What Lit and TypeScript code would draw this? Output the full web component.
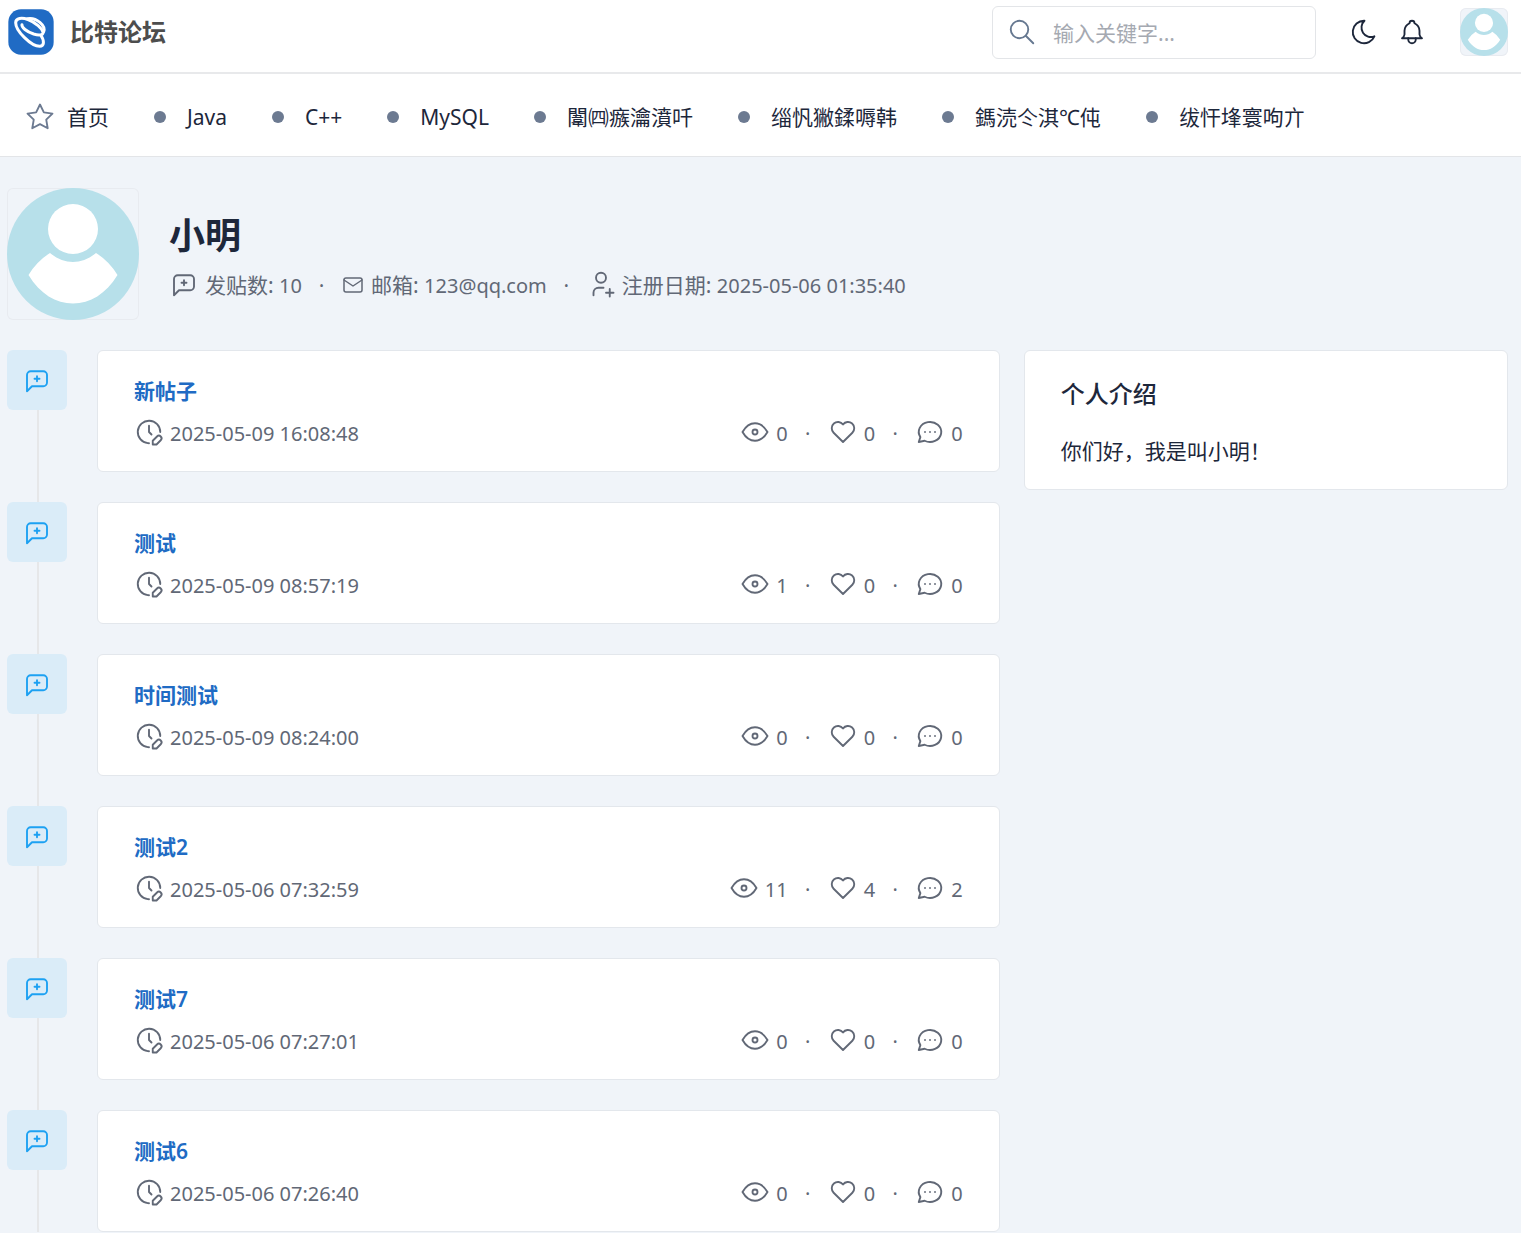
import { LitElement, html, css, svg } from "lit";
import { customElement, property } from "lit/decorators.js";

const ICONS: Record<string, string[]> = {
  star: [
    "M12 17.75l-6.172 3.245l1.179 -6.873l-5 -4.867l6.9 -1l3.086 -6.253l3.086 6.253l6.9 1l-5 4.867l1.179 6.873z",
  ],
  search: ["M10 10m-7 0a7 7 0 1 0 14 0a7 7 0 1 0 -14 0", "M21 21l-6 -6"],
  moon: ["M12 3c.132 0 .263 0 .393 0a7.5 7.5 0 0 0 7.92 12.446a9 9 0 1 1 -8.313 -12.454z"],
  bell: [
    "M10 5a2 2 0 1 1 4 0a7 7 0 0 1 4 6v3a4 4 0 0 0 2 3h-16a4 4 0 0 0 2 -3v-3a7 7 0 0 1 4 -6",
    "M9 17v1a3 3 0 0 0 6 0v-1",
  ],
  messagePlus: [
    "M4 21v-13a3 3 0 0 1 3 -3h10a3 3 0 0 1 3 3v6a3 3 0 0 1 -3 3h-9l-4 4",
    "M10 11h4",
    "M12 9v4",
  ],
  mail: [
    "M3 7a2 2 0 0 1 2 -2h14a2 2 0 0 1 2 2v10a2 2 0 0 1 -2 2h-14a2 2 0 0 1 -2 -2v-10z",
    "M3 7l9 6l9 -6",
  ],
  userPlus: [
    "M8 7a4 4 0 1 0 8 0a4 4 0 0 0 -8 0",
    "M16 19h6",
    "M19 16v6",
    "M6 21v-2a4 4 0 0 1 4 -4h4",
  ],
  clockEdit: [
    "M21 12a9 9 0 1 0 -9.972 8.948c.32 .034 .644 .052 .972 .052",
    "M12 7v5l2 2",
    "M18.42 15.61a2.1 2.1 0 0 1 2.97 2.97l-3.39 3.42h-3v-3l3.42 -3.39z",
  ],
  eye: [
    "M12 12m-2 0a2 2 0 1 0 4 0a2 2 0 1 0 -4 0",
    "M22 12c-2.667 4.667 -6 7 -10 7s-7.333 -2.333 -10 -7c2.667 -4.667 6 -7 10 -7s7.333 2.333 10 7",
  ],
  heart: [
    "M19.5 12.572l-7.5 7.428l-7.5 -7.428a5 5 0 1 1 7.5 -6.566a5 5 0 1 1 7.5 6.572",
  ],
  comment: [
    "M3 20l1.3 -3.9a9 8 0 1 1 3.4 2.9l-4.7 1",
    "M12 12v.01",
    "M8 12v.01",
    "M16 12v.01",
  ],
};

interface Post {
  title: string;
  date: string;
  views: number;
  likes: number;
  replies: number;
}

const BOARDS = [
  "Java",
  "C++",
  "MySQL",
  "闈㈣瘯瀹濆吀",
  "缁忛獙鍒嗕韩",
  "鎷涜仒淇℃伅",
  "绂忓埄寰呴亣",
];

const POSTS: Post[] = [
  { title: "新帖子", date: "2025-05-09 16:08:48", views: 0, likes: 0, replies: 0 },
  { title: "测试", date: "2025-05-09 08:57:19", views: 1, likes: 0, replies: 0 },
  { title: "时间测试", date: "2025-05-09 08:24:00", views: 0, likes: 0, replies: 0 },
  { title: "测试2", date: "2025-05-06 07:32:59", views: 11, likes: 4, replies: 2 },
  { title: "测试7", date: "2025-05-06 07:27:01", views: 0, likes: 0, replies: 0 },
  { title: "测试6", date: "2025-05-06 07:26:40", views: 0, likes: 0, replies: 0 },
];

@customElement("line-icon")
export class LineIcon extends LitElement {
  @property() name = "";

  static styles = css`
    :host {
      display: block;
      flex: none;
      width: 30px;
      height: 30px;
    }
    .glyph {
      display: block;
      width: 100%;
      height: 100%;
      fill: none;
      stroke: currentColor;
      stroke-width: 1.5;
      stroke-linecap: round;
      stroke-linejoin: round;
    }
  `;

  render() {
    return html`<svg class="glyph" viewBox="0 0 24 24" aria-hidden="true">
      ${(ICONS[this.name] ?? []).map((d) => svg`<path d=${d}></path>`)}
    </svg>`;
  }
}

@customElement("user-avatar")
export class UserAvatar extends LitElement {
  static styles = css`
    :host {
      display: block;
      flex: none;
      box-sizing: border-box;
      overflow: hidden;
      border-radius: 6px;
      background: #f0f4f9;
      box-shadow: inset 0 0 0 1px #e8ebf0;
    }
    .portrait {
      display: block;
      width: 100%;
      height: 100%;
    }
  `;

  render() {
    return html`<svg class="portrait" viewBox="0 0 132 132" aria-hidden="true">
      <circle cx="66" cy="66" r="66" fill="#b7e0ea"></circle>
      <circle cx="66" cy="41" r="25" fill="#fff"></circle>
      <path
        d="M43 65C57 77 75 77 89 65Q102 73 110.500 87C99 106 83 115.500 66 115.500S33 106 21.500 87Q30 73 43 65Z"
        fill="#fff"
      ></path>
    </svg>`;
  }
}

@customElement("post-item")
export class PostItem extends LitElement {
  @property({ attribute: false }) post!: Post;

  static styles = css`
    :host {
      display: flex;
      gap: 30px;
    }
    .rail {
      display: flex;
      flex-direction: column;
      flex: none;
      width: 60px;
    }
    .badge {
      display: grid;
      place-items: center;
      height: 60px;
      border-radius: 6px;
      background: #daecf8;
      color: #1da1f2;
    }
    .line {
      flex: 1;
      width: 2px;
      margin-left: 30px;
      background: #e6e7e9;
    }
    .body {
      flex: 1;
      min-width: 0;
      padding-bottom: var(--item-gap, 30px);
    }
    .card {
      padding: 24px 36px 19px;
      border: 1px solid #e3e7ec;
      border-radius: 6px;
      background: #fff;
    }
    .title {
      margin: 0 0 9px;
      font-size: 21px;
      line-height: 32px;
      font-weight: 600;
    }
    .link {
      color: #206bc4;
      text-decoration: none;
    }
    .facts,
    .stats,
    .fact {
      display: flex;
      align-items: center;
    }
    .facts {
      justify-content: space-between;
      height: 36px;
      color: #616876;
      font-size: 20px;
      line-height: 30px;
    }
    .fact {
      gap: 6px;
    }
    .dot {
      width: 40px;
      text-align: center;
    }
    .icon {
      margin-bottom: 4px;
    }
  `;

  render() {
    const p = this.post;
    return html`
      <div class="rail">
        <span class="badge"><line-icon name="messagePlus"></line-icon></span>
        <span class="line"></span>
      </div>
      <div class="body">
        <article class="card">
          <h3 class="title"><a class="link" href="#">${p.title}</a></h3>
          <div class="facts">
            <span class="fact"
              ><line-icon class="icon" name="clockEdit"></line-icon><time>${p.date}</time></span
            >
            <div class="stats">
              <span class="fact"><line-icon class="icon" name="eye"></line-icon>${p.views}</span>
              <span class="dot">·</span>
              <span class="fact"><line-icon class="icon" name="heart"></line-icon>${p.likes}</span>
              <span class="dot">·</span>
              <span class="fact"
                ><line-icon class="icon" name="comment"></line-icon>${p.replies}</span
              >
            </div>
          </div>
        </article>
      </div>
    `;
  }
}

@customElement("app-root")
export class AppRoot extends LitElement {
  static styles = css`
    :host {
      display: block;
      min-height: 100vh;
      background: #f0f4f9;
      color: #1d273b;
      font-family: "Noto Sans", "Noto Sans CJK SC", sans-serif;
      font-size: 21px;
      line-height: 30px;
    }
    .top {
      display: flex;
      align-items: center;
      height: 64px;
      padding: 0 13px 8px 8px;
      border-bottom: 2px solid #e8e9eb;
      background: #fff;
    }
    .brand {
      display: flex;
      align-items: center;
      gap: 16px;
      margin-right: auto;
      color: #4d4d4d;
      font-size: 24px;
      font-weight: 700;
      text-decoration: none;
    }
    .logo {
      display: block;
      width: 46px;
      height: 46px;
    }
    .search {
      display: flex;
      align-items: center;
      gap: 16px;
      box-sizing: border-box;
      width: 324px;
      height: 53px;
      padding: 0 14px;
      border: 1px solid #e3e5e8;
      border-radius: 6px;
      color: #667890;
    }
    .field {
      flex: 1;
      min-width: 0;
      padding: 2px 0 0;
      border: 0;
      outline: 0;
      background: none;
      color: #1d273b;
      font: inherit;
    }
    .field::placeholder {
      color: #a5a9b1;
      opacity: 1;
    }
    .tool {
      display: grid;
      place-items: center;
      width: 48px;
      height: 48px;
      padding: 0;
      border: 0;
      background: none;
      color: inherit;
    }
    .theme {
      margin-left: 24px;
    }
    .account {
      margin-left: 24px;
    }
    .small {
      width: 48px;
      height: 48px;
    }
    .nav {
      display: flex;
      align-items: center;
      gap: 36px;
      height: 79px;
      padding: 3px 25px 0;
      border-bottom: 1px solid #e3e5e8;
      background: #fff;
    }
    .tab {
      display: flex;
      align-items: center;
      gap: 12px;
      color: inherit;
      text-decoration: none;
      white-space: nowrap;
    }
    .mark {
      color: #6c7a91;
    }
    .bullet {
      width: 12px;
      height: 12px;
      margin: 9px;
      border-radius: 50%;
      background: #6c7a91;
    }
    .page {
      padding: 31px 13px 0 7px;
    }
    .profile {
      display: flex;
      align-items: center;
      gap: 30px;
      margin-bottom: 30px;
    }
    .large {
      width: 132px;
      height: 132px;
    }
    .summary {
      padding-top: 5px;
    }
    .name {
      margin: 0 0 9px;
      font-size: 36px;
      line-height: 48px;
      font-weight: 700;
    }
    .meta,
    .entry {
      display: flex;
      align-items: center;
      white-space: nowrap;
    }
    .meta {
      color: #616876;
    }
    .entry {
      gap: 6px;
    }
    .value {
      font-size: 20px;
    }
    .sep {
      width: 39px;
      text-align: center;
    }
    .symbol {
      margin-bottom: 2px;
    }
    .envelope {
      width: 24px;
      height: 24px;
    }
    .columns {
      display: grid;
      grid-template-columns: repeat(12, minmax(0, 1fr));
      gap: 24px;
      align-items: start;
    }
    .posts {
      grid-column: span 8;
      margin: 0;
      padding: 0;
      list-style: none;
    }
    .post:last-child {
      --item-gap: 0px;
    }
    .about {
      grid-column: span 4;
      padding: 25px 36px 23px;
      border: 1px solid #e3e7ec;
      border-radius: 6px;
      background: #fff;
    }
    .heading {
      margin: 0 0 24px;
      font-size: 24px;
      line-height: 36px;
      font-weight: 500;
    }
    .text {
      margin: 0;
    }
  `;

  render() {
    return html`
      <header class="top">
        <a class="brand" href="#">
          <svg class="logo" viewBox="0 0 138 138" aria-hidden="true">
            <rect x="1" y="1" width="136" height="136" rx="38" fill="#206bc4"></rect>
            <g fill="none" stroke="#fff" stroke-width="9" stroke-linecap="round">
              <path
                d="M98 78C110 96 109 112 95 112C70 112 23 66 23 41C23 27 42 25 60 32C84 41 102 58 105 69C107 80 90 79 77 75C56 68 40 55 42 47"
              />
              <path d="M58 29C86 24 114 50 107 68" />
            </g>
          </svg>
          比特论坛
        </a>
        <label class="search">
          <line-icon name="search"></line-icon>
          <input class="field" type="text" placeholder="输入关键字..." aria-label="输入关键字" />
        </label>
        <button class="tool theme" type="button" aria-label="主题">
          <line-icon name="moon"></line-icon>
        </button>
        <button class="tool" type="button" aria-label="通知">
          <line-icon name="bell"></line-icon>
        </button>
        <button class="tool account" type="button" aria-label="账户">
          <user-avatar class="small"></user-avatar>
        </button>
      </header>
      <nav class="nav">
        <a class="tab" href="#"><line-icon class="mark" name="star"></line-icon>首页</a>
        ${BOARDS.map((b) => html`<a class="tab" href="#"><span class="bullet"></span>${b}</a>`)}
      </nav>
      <main class="page">
        <section class="profile">
          <user-avatar class="large"></user-avatar>
          <div class="summary">
            <h1 class="name">小明</h1>
            <div class="meta">
              <span class="entry"
                ><line-icon class="symbol" name="messagePlus"></line-icon
                ><span>发贴数: <span class="value">10</span></span></span
              >
              <span class="sep">·</span>
              <span class="entry"
                ><line-icon class="envelope" name="mail"></line-icon
                ><span>邮箱: <span class="value">123@qq.com</span></span></span
              >
              <span class="sep">·</span>
              <span class="entry"
                ><line-icon class="symbol" name="userPlus"></line-icon
                ><span>注册日期: <span class="value">2025-05-06 01:35:40</span></span></span
              >
            </div>
          </div>
        </section>
        <div class="columns">
          <ul class="posts">
            ${POSTS.map((p) => html`<li class="post"><post-item .post=${p}></post-item></li>`)}
          </ul>
          <aside class="about">
            <h2 class="heading">个人介绍</h2>
            <p class="text">你们好，我是叫小明！</p>
          </aside>
        </div>
      </main>
    `;
  }
}
